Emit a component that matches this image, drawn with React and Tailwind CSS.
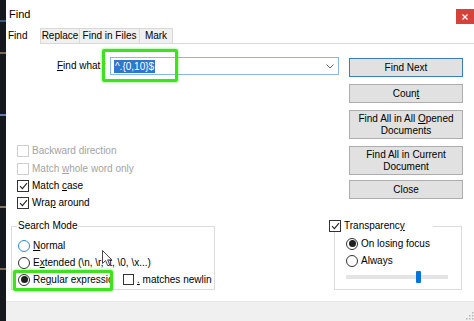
import React from "react";

function Check({ checked, disabled, children, size = "w-[12px] h-[12px]" }) {
  return (
    <div className="flex items-center">
      <span
        className={`${size} shrink-0 border bg-white flex items-center justify-center ${
          disabled ? "border-[#cfcfcf]" : "border-[#333333]"
        }`}
      >
        {checked && (
          <svg width="9" height="8" viewBox="0 0 9 8">
            <path d="M1 4.2 L3.4 6.6 L8 1.2" fill="none" stroke="#222" strokeWidth="1.1" />
          </svg>
        )}
      </span>
      <span className={`ml-[3px] whitespace-nowrap ${disabled ? "text-[#a3a3a3]" : "text-black"}`}>
        {children}
      </span>
    </div>
  );
}

function Radio({ checked, hover, children, labelClass = "" }) {
  return (
    <div className="flex items-center h-[17px]">
      <span
        className={`w-[12px] h-[12px] shrink-0 rounded-full border bg-white flex items-center justify-center ${
          hover ? "border-[#2f8ad8]" : "border-[#333333]"
        }`}
      >
        {checked && <span className="w-[7px] h-[7px] rounded-full bg-[#1f1f1f]" />}
      </span>
      <span className={`ml-[3px] whitespace-nowrap ${labelClass}`}>{children}</span>
    </div>
  );
}

function Btn({ children, focused, tall, className = "" }) {
  return (
    <div
      className={`w-[114px] ${tall ? "h-[29px]" : "h-[19px]"} bg-[#e1e1e1] border ${
        focused ? "border-[#3d7db8]" : "border-[#adadad]"
      } flex items-center justify-center text-center leading-[12px] ${className}`}
    >
      {children}
    </div>
  );
}

export default function App() {
  return (
    <div className="relative w-[474px] h-[321px] flex overflow-hidden bg-white text-[10px] leading-[12px] text-black font-['Liberation_Sans',Arial,sans-serif]">
      {/* desktop peeking at the left edge */}
      <div className="w-[6px] h-full flex flex-col bg-[#15191e]">
        <div className="h-[20px]" />
        <div className="h-[2px] bg-[#3d5a80]" />
        <div className="h-[30px]" />
        <div className="h-[2px] bg-[#7a6a55]" />
        <div className="h-[60px]" />
        <div className="h-[2px] bg-[#5e7ea8]" />
        <div className="h-[90px]" />
        <div className="h-[2px] bg-[#8a7660]" />
        <div className="h-[60px]" />
        <div className="h-[2px] bg-[#7a6a55]" />
      </div>

      <div className="flex-1 flex flex-col">
        {/* title bar */}
        <div className="h-[27px] flex justify-between">
          <span className="pl-[3px] pt-[7px] text-[11px] leading-[14px]">Find</span>
          <div className="mt-[9px] w-[18px] h-[15px] bg-[#d5423b] flex items-center justify-center">
            <svg width="6" height="6" viewBox="0 0 6 6">
              <path d="M0.5 0.5 L5.5 5.5 M5.5 0.5 L0.5 5.5" stroke="#fff" strokeWidth="1.3" />
            </svg>
          </div>
        </div>

        {/* tabs */}
        <div className="h-[17px] flex items-end border-b border-[#d9d9d9]">
          <div className="relative -mb-px w-[34px] h-[17px] bg-white pl-[2px] pt-[3px]">Find</div>
          <div className="w-[40px] h-[15px] bg-[#f0f0f0] border border-b-0 border-[#d9d9d9] flex items-center justify-center">
            Replace
          </div>
          <div className="w-[60px] h-[15px] bg-[#f0f0f0] border border-b-0 border-l-0 border-[#d9d9d9] flex items-center justify-center">
            Find in Files
          </div>
          <div className="w-[33px] h-[15px] bg-[#f0f0f0] border border-b-0 border-l-0 border-[#d9d9d9] flex items-center justify-center">
            Mark
          </div>
        </div>

        {/* top section */}
        <div className="h-[169px] flex">
          <div className="flex-1 flex flex-col">
            <div className="mt-[13px] h-[18px] flex items-center pl-[51px]">
              <span className="whitespace-nowrap">
                <span className="underline">F</span>ind what :
              </span>
              <div className="ml-[4px] w-[229px] h-[18px] border border-[#86b8e8] bg-white flex items-center pl-[3px] pr-[4px]">
                <span className="bg-[#2f76cf] text-white px-[1px] leading-[13px]">^.{"{0,10}"}$</span>
                <svg className="ml-auto" width="8" height="5" viewBox="0 0 8 5">
                  <path d="M0.5 0.5 L4 4 L7.5 0.5" fill="none" stroke="#666" strokeWidth="1" />
                </svg>
              </div>
            </div>

            <div className="mt-[70px] pl-[11px] flex flex-col">
              <Check disabled>Backward direction</Check>
              <div className="mt-[6px]">
                <Check disabled>
                  Match <span className="underline">w</span>hole word only
                </Check>
              </div>
              <div className="mt-[5px]">
                <Check checked>
                  Match <span className="underline">c</span>ase
                </Check>
              </div>
              <div className="mt-[5px]">
                <Check checked>
                  Wra<span className="underline">p</span> around
                </Check>
              </div>
            </div>
          </div>

          <div className="w-[114px] mr-[11px] flex flex-col">
            <Btn focused className="mt-[14px]">Find Next</Btn>
            <Btn className="mt-[7px]">
              <span>
                Coun<span className="underline">t</span>
              </span>
            </Btn>
            <Btn tall className="mt-[7px]">
              <span>
                Find All in All <span className="underline">O</span>pened
                <br />
                Documents
              </span>
            </Btn>
            <Btn tall className="mt-[7px]">
              <span>
                Find All in Current
                <br />
                Document
              </span>
            </Btn>
            <Btn className="mt-[5px]">Close</Btn>
          </div>
        </div>

        {/* bottom section */}
        <div className="h-[88px] pt-[7px] flex justify-between">
          <fieldset className="ml-[5px] w-[204px] h-[70px] border border-[#dcdcdc] pl-[6px]">
            <legend className="-ml-[1px] px-[1px]">Search Mode</legend>
            <div className="pt-[5px] flex flex-col">
              <Radio hover>
                <span className="underline">N</span>ormal
              </Radio>
              <Radio>
                E<span className="underline">x</span>tended (\n, \r, \t, \0, \x...)
              </Radio>
              <div className="w-[194px] flex items-center overflow-hidden whitespace-nowrap">
                <Radio checked labelClass="w-[78px] overflow-hidden">
                  Re<span className="underline">g</span>ular expression
                </Radio>
                <div className="ml-[12px]">
                  <Check size="w-[11px] h-[11px]">
                    <span className="underline">.</span> matches newline
                  </Check>
                </div>
              </div>
            </div>
          </fieldset>

          <fieldset className="mr-[12px] w-[128px] h-[70px] border border-[#dcdcdc] pl-[11px]">
            <legend className="-ml-[17px] w-[104px]">
              <Check checked>
                Transparenc<span className="underline">y</span>
              </Check>
            </legend>
            <div className="pt-[3px] flex flex-col">
              <Radio checked>On losing focus</Radio>
              <Radio>Always</Radio>
              <div className="mt-[2px] w-[102px] h-[12px] flex items-center">
                <div className="w-[70px] h-[4px] bg-[#e4e4e4]" />
                <div className="w-[5px] h-[12px] bg-[#0a74d6] rounded-[1px]" />
                <div className="flex-1 h-[4px] bg-[#e4e4e4]" />
              </div>
            </div>
          </fieldset>
        </div>

        {/* status strip */}
        <div className="h-[20px] bg-[#f0f0f0] border-t border-[#e6e6e6] flex justify-end items-end">
          <svg width="8" height="8" viewBox="0 0 8 8" className="mb-[1px]">
            <g fill="#b5b5b5">
              <rect x="6" y="0" width="1.5" height="1.5" />
              <rect x="3" y="3" width="1.5" height="1.5" />
              <rect x="6" y="3" width="1.5" height="1.5" />
              <rect x="0" y="6" width="1.5" height="1.5" />
              <rect x="3" y="6" width="1.5" height="1.5" />
              <rect x="6" y="6" width="1.5" height="1.5" />
            </g>
          </svg>
        </div>
      </div>

      {/* annotation boxes drawn over the dialog */}
      <div className="absolute left-[102px] top-[49px] w-[76px] h-[33px] border-[3px] border-[#3fe21f] rounded-[2px] shadow-[0_0_3px_rgba(60,220,30,0.7)]" />
      <div className="absolute left-[13px] top-[270px] w-[100px] h-[21px] border-[3px] border-[#3fe21f] rounded-[2px] shadow-[0_0_3px_rgba(60,220,30,0.7)]" />

      {/* mouse pointer */}
      <svg className="absolute left-[102px] top-[250px]" width="11" height="17" viewBox="0 0 11 17">
        <path
          d="M0.5 0.5 L0.5 13.5 L3.6 10.6 L5.8 15.8 L7.8 15 L5.7 9.9 L9.8 9.9 Z"
          fill="#fff"
          stroke="#333"
          strokeWidth="0.9"
          strokeLinejoin="round"
        />
      </svg>
    </div>
  );
}
